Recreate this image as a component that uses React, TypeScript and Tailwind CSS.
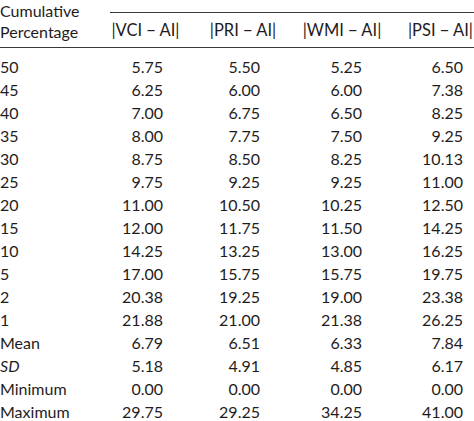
const ROWS: [string, string, string, string, string][] = [
  ["50", "5.75", "5.50", "5.25", "6.50"],
  ["45", "6.25", "6.00", "6.00", "7.38"],
  ["40", "7.00", "6.75", "6.50", "8.25"],
  ["35", "8.00", "7.75", "7.50", "9.25"],
  ["30", "8.75", "8.50", "8.25", "10.13"],
  ["25", "9.75", "9.25", "9.25", "11.00"],
  ["20", "11.00", "10.50", "10.25", "12.50"],
  ["15", "12.00", "11.75", "11.50", "14.25"],
  ["10", "14.25", "13.25", "13.00", "16.25"],
  ["5", "17.00", "15.75", "15.75", "19.75"],
  ["2", "20.38", "19.25", "19.00", "23.38"],
  ["1", "21.88", "21.00", "21.38", "26.25"],
  ["Mean", "6.79", "6.51", "6.33", "7.84"],
  ["SD", "5.18", "4.91", "4.85", "6.17"],
  ["Minimum", "0.00", "0.00", "0.00", "0.00"],
  ["Maximum", "29.75", "29.25", "34.25", "41.00"],
];

const HEADERS = ["|VCI − AI|", "|PRI − AI|", "|WMI − AI|", "|PSI − AI|"];
const PADS = ["pr-[31px]", "pr-[32px]", "pr-[30px]", "pr-[26px]"];

export default function App() {
  return (
    <div className="w-[474px] h-[421px] overflow-hidden bg-white text-[#1f1c1d] font-['Lato',sans-serif] text-[16px]">
      {/* Header */}
      <div className="grid grid-cols-[97px_97px_98px_100px_97px] border-b border-[#3a3a3a]">
        <div className="row-span-2 leading-[21px]">
          Cumulative
          <br />
          Percentage
        </div>
        {/* spanner heading, cropped at the top of the picture */}
        <div className="col-span-4 h-[13px] ml-[13px] border-b border-[#3a3a3a] overflow-hidden">
          <div className="mt-[-19px] leading-[20px] text-center whitespace-nowrap pr-[10px]">
            Absolute Difference (Normative Sample)
          </div>
        </div>
        {HEADERS.map((h) => (
          <div key={h} className="pt-[7px] pb-[6px] leading-[21px] text-center whitespace-nowrap text-[16.5px]">
            {h}
          </div>
        ))}
      </div>

      {/* Body */}
      <div className="pt-[7px]">
        {ROWS.map((r) => (
          <div key={r[0]} className="grid grid-cols-[97px_97px_98px_100px_97px] h-[23px] leading-[23px]">
            <div className={r[0] === "SD" ? "italic" : ""}>{r[0]}</div>
            {r.slice(1).map((v, i) => (
              <div key={i} className={`text-right ${PADS[i]}`}>
                {v}
              </div>
            ))}
          </div>
        ))}
      </div>
    </div>
  );
}
